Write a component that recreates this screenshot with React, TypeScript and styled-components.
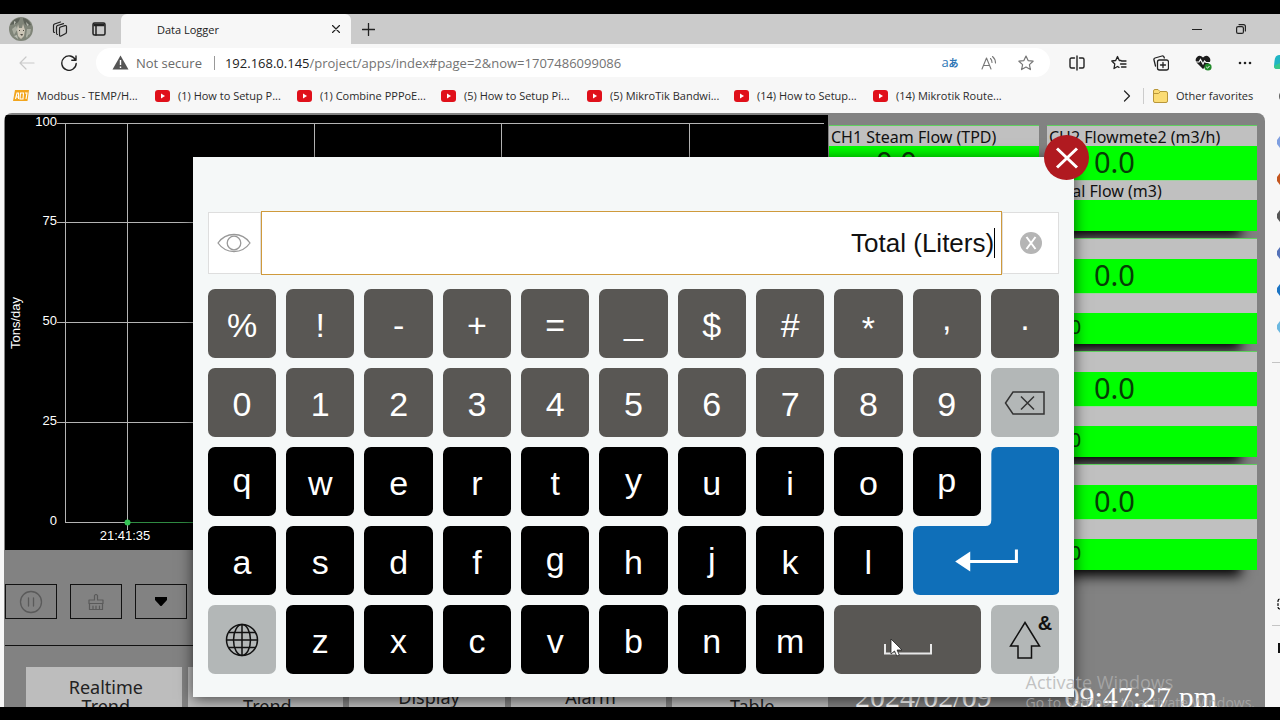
import React from "react";
import styled, { createGlobalStyle } from "styled-components";

const ui = '"Open Sans", "Noto Sans", sans-serif';
const arial = '"Liberation Sans", Arial, sans-serif';
const panelFont = '"Noto Sans", Tahoma, sans-serif';

const GlobalStyle = createGlobalStyle`
  *, *::before, *::after { box-sizing: border-box; }
  body { margin: 0; background: #000; font-family: ${ui}; }
  button { margin: 0; padding: 0; border: 0; background: none; color: inherit; font: inherit; cursor: pointer; }
  svg { display: block; flex: none; }
`;

const Frame = styled.div`
  display: flex;
  flex-direction: column;
  height: 100vh;
  padding: 14px 0 13px;
  background: #000;
  overflow: hidden;
`;

const IconButton = styled.button<{ $w?: number; $color?: string }>`
  display: flex;
  align-items: center;
  justify-content: center;
  flex: none;
  width: ${(p) => p.$w ?? 40}px;
  height: 28px;
  color: ${(p) => p.$color ?? "#222"};
`;

/* ---------- browser chrome ---------- */

const TabBar = styled.header`
  display: flex;
  align-items: center;
  flex: none;
  height: 30px;
  padding-left: 2px;
  background: #cbcbcb;
  overflow: hidden;
`;

const Tab = styled.div`
  display: flex;
  align-items: center;
  justify-content: space-between;
  width: 230px;
  height: 30px;
  margin-left: 2px;
  padding: 0 8px 0 36px;
  border-radius: 6px 6px 0 0;
  background: #f7f7f7;
  color: #222;
  font-size: 11px;
`;

const Spacer = styled.div`
  flex: 1;
`;

const AddressRow = styled.div`
  display: flex;
  align-items: center;
  flex: none;
  height: 38px;
  padding: 0 0 1px 6px;
  background: #f7f7f7;
  overflow: hidden;
`;

const AddressPill = styled.div`
  display: flex;
  align-items: center;
  flex: 1;
  min-width: 0;
  height: 29px;
  margin: 0 6px;
  padding: 0 6px 0 16px;
  border-radius: 15px;
  background: #fff;
`;

const NotSecure = styled.span`
  margin-left: 7px;
  padding-right: 12px;
  border-right: 1px solid #999;
  color: #6a6a6a;
  font-size: 13px;
  line-height: 14px;
  white-space: nowrap;
`;

const Url = styled.div`
  flex: 1;
  min-width: 0;
  padding-left: 10px;
  overflow: hidden;
  color: #737373;
  font-size: 13px;
  line-height: 18px;
  white-space: nowrap;
  b { color: #222; font-weight: 400; }
`;

const Translate = styled.span`
  font-family: "Open Sans", "Noto Sans CJK JP", sans-serif;
  font-size: 13px;
  line-height: 18px;
  small { font-size: 10px; font-weight: 700; }
`;

const BookmarkBar = styled.nav`
  display: flex;
  align-items: center;
  flex: none;
  height: 31px;
  padding: 0 0 4px 13px;
  background: #f7f7f7;
  overflow: hidden;
`;

const Bookmark = styled.a<{ $w?: number }>`
  display: flex;
  align-items: center;
  gap: 8px;
  flex: none;
  width: ${(p) => (p.$w ? `${p.$w}px` : "auto")};
  color: #2b2b2b;
  font-size: 11px;
  text-decoration: none;
  white-space: nowrap;
`;

const BarDivider = styled.span`
  width: 1px;
  height: 16px;
  margin-right: 9px;
  background: #ccc;
`;

/* ---------- page and sidebar ---------- */

const Body = styled.div`
  display: flex;
  flex: 1;
  min-height: 0;
  padding-left: 4px;
  background: #f7f7f7;
`;

const Page = styled.main`
  position: relative;
  flex: 1;
  min-width: 0;
  padding: 2px 0 0 1px;
  border-radius: 8px 8px 0 0;
  background: #828282;
  overflow: hidden;
`;

const Sidebar = styled.aside`
  display: flex;
  flex-direction: column;
  width: 15px;
  padding: 10px 0 41px;
  overflow: hidden;
`;

const SideItem = styled.button`
  display: flex;
  align-items: center;
  flex: none;
  width: 30px;
  height: 37px;
  padding-left: 12px;
`;

const SideRule = styled.hr<{ $gap: number }>`
  width: 8px;
  margin: ${(p) => p.$gap}px 0 3px 7px;
  border: 0;
  border-top: 1px solid #c4c4c4;
`;

const Dashboard = styled.div`
  display: flex;
  align-items: flex-start;
`;

const TrendPanel = styled.section`
  flex: 1;
  min-width: 0;
`;

const Chart = styled.svg`
  width: 100%;
  height: 435px;
  background: #000;
  font-family: ${arial};
  font-size: 13px;
  fill: #fff;
`;

const Controls = styled.div`
  display: flex;
  gap: 13px;
  height: 96px;
  padding-top: 34px;
  border-bottom: 1px solid #111;
`;

const ControlButton = styled.button`
  display: flex;
  align-items: center;
  justify-content: center;
  width: 52px;
  height: 35px;
  border: 1px solid #111;
  color: #5a5a5a;
`;

const Readouts = styled.section`
  display: grid;
  grid-template-columns: 1fr 1fr;
  gap: 7px 8px;
  width: 437px;
  padding: 10px 8px 0 1px;
`;

const Card = styled.article`
  font-family: ${panelFont};
  background: #0f0;
  box-shadow: 0 22px 12px -16px #000;
`;

const CardLabel = styled.h2<{ $short?: boolean }>`
  height: ${(p) => (p.$short ? 20 : 21)}px;
  margin: 0;
  padding: ${(p) => (p.$short ? 0 : 1)}px 2px 0;
  border-top: 1px solid ${(p) => (p.$short ? "#9fd39f" : "#5fd05f")};
  background: #c0c0c0;
  color: #111;
  font-size: 16px;
  font-weight: 400;
  line-height: 20px;
  white-space: nowrap;
`;

const CardValue = styled.div`
  height: 34px;
  padding-left: 47px;
  color: #063d06;
  font-size: 29px;
  line-height: 32px;
`;

const CardTotal = styled.div`
  height: 31px;
  padding-left: 6px;
  color: #063d06;
  font-size: 20px;
  line-height: 28px;
`;

const Footer = styled.footer`
  display: flex;
  margin-top: 21px;
  padding-left: 21px;
`;

const PageNav = styled.nav`
  display: flex;
  gap: 6px;
  flex: 1;
`;

const NavLink = styled.a`
  display: flex;
  align-items: center;
  justify-content: center;
  flex: 1;
  height: 60px;
  padding-left: 4px;
  background: #bdbdbd;
  color: #222;
  font-family: ${panelFont};
  font-size: 18px;
  line-height: 19px;
  text-align: center;
  text-decoration: none;
`;

const Clock = styled.div`
  display: flex;
  justify-content: space-between;
  width: 437px;
  padding: 0 48px 0 27px;
  color: #fff;
  font-family: "Liberation Serif", serif;
  font-size: 30px;
  line-height: 60px;
`;

const Watermark = styled.div`
  position: absolute;
  right: 10px;
  bottom: -5px;
  color: rgba(176, 176, 176, 0.75);
  font-size: 14px;
  line-height: 18px;
  white-space: nowrap;
  strong { display: block; font-size: 18px; font-weight: 400; line-height: 24px; }
`;

/* ---------- keyboard dialog ---------- */

const Overlay = styled.div`
  position: absolute;
  inset: 0;
  display: flex;
  align-items: flex-start;
  justify-content: center;
  padding: 44px 2px 0 0;
`;

const Dialog = styled.section`
  position: relative;
  width: 70%;
  min-width: 881px;
  padding: 54px 15px 23px;
  background: #f5f8f8;
  box-shadow: 0 2px 14px rgba(0, 0, 0, 0.65);
`;

const CloseButton = styled.button`
  position: absolute;
  top: -22px;
  right: -15px;
  display: flex;
  align-items: center;
  justify-content: center;
  width: 45px;
  height: 45px;
  border-radius: 50%;
  background: #b01a20;
`;

const EntryRow = styled.div`
  display: flex;
  align-items: center;
  margin-bottom: 14px;
`;

const EntryButton = styled.button<{ $w: number }>`
  display: flex;
  align-items: center;
  justify-content: center;
  width: ${(p) => p.$w}px;
  height: 62px;
  border: 1px solid #dedede;
  background: #fff;
`;

const EntryField = styled.div`
  display: flex;
  align-items: center;
  flex: 1;
  height: 64px;
  padding-right: 6px;
  border: 1px solid #cf9a3c;
  background: #fff;
`;

const EntryInput = styled.input`
  flex: 1;
  min-width: 0;
  padding: 0;
  border: 0;
  outline: 0;
  background: transparent;
  color: #111;
  font-family: ${arial};
  font-size: 26px;
  text-align: right;
`;

const Caret = styled.span`
  width: 1px;
  height: 30px;
  background: #000;
`;

const Keys = styled.div`
  display: grid;
  grid-template-columns: repeat(11, 1fr);
  grid-auto-rows: 69px;
  gap: 10px;
`;

type Tone = "symbol" | "letter" | "control";
type Place = "base" | "middle" | "high" | "raised" | "low" | "bottom";

const toneColor: Record<Tone, string> = { symbol: "#595754", letter: "#000", control: "#b3b7b7" };
const placePadding: Record<Place, string> = {
  base: "2px 0 0",
  middle: "0",
  high: "0 0 4px",
  raised: "0 0 12px",
  low: "8px 0 0",
  bottom: "20px 0 0",
};

const Key = styled.button<{ $tone: Tone; $place?: Place; $area?: string }>`
  position: relative;
  display: flex;
  align-items: center;
  justify-content: center;
  grid-area: ${(p) => p.$area ?? "auto"};
  min-width: 0;
  padding: ${(p) => placePadding[p.$place ?? "base"]};
  border-radius: 7px;
  background: ${(p) => toneColor[p.$tone]};
  color: ${(p) => (p.$tone === "control" ? "#111" : "#fff")};
  font-family: ${arial};
  font-size: 34px;
  line-height: 38px;
`;

const EnterKey = styled.button`
  grid-area: 3 / 10 / 5 / 12;
  pointer-events: none;
  svg { width: 100%; height: 100%; }
  path { pointer-events: auto; }
`;

const ShiftMark = styled.span`
  position: absolute;
  top: 6px;
  right: 7px;
  font-size: 20px;
  font-weight: 700;
  line-height: 24px;
`;

const Pointer = styled.svg`
  position: absolute;
  top: 33px;
  left: 56px;
`;

/* ---------- icons ---------- */

type LineProps = { w?: number; h?: number; sw?: number; children: React.ReactNode };
const Line = ({ w = 16, h = 16, sw = 1.2, children }: LineProps) => (
  <svg
    width={w}
    height={h}
    viewBox={`0 0 ${w} ${h}`}
    fill="none"
    stroke="currentColor"
    strokeWidth={sw}
    strokeLinecap="round"
    strokeLinejoin="round"
    aria-hidden="true"
  >
    {children}
  </svg>
);

const Avatar = () => (
  <svg width="24" height="24" viewBox="0 0 24 24" aria-hidden="true">
    <circle cx="12" cy="12" r="12" fill="#7f8478" />
    <path d="M1 8Q5 1 11 1q-1 5-5 6zM14 1q6 1 8 7l-4 1q-4-3-4-8z" fill="#5d6259" />
    <path d="M3 12l4-3 1 4-3 5zM18 12l4 0-1 5-4 2z" fill="#a9aca0" />
    <path d="M9 7l1 4h3l1-4 2 6-1 6-3 3-3-3-1-6z" fill="#cbc5b6" />
    <path d="M5 4l2 1-2 3zM17 5l3 3-2 1zM5 19l3-1 1 4zM17 19l2-2-1 4zM8 9l1 3-2 2z" fill="#b9bcb2" />
    <path d="M10 13h1v1h-1zM14 13h1v1h-1zM11 17h3l-1 2z" fill="#4d4a42" />
  </svg>
);

const YouTube = () => (
  <svg width="15" height="12" viewBox="0 0 15 12" aria-hidden="true">
    <rect width="15" height="12" rx="3" fill="#e0101a" />
    <path d="M6 3.5l4 2.5-4 2.5z" fill="#fff" />
  </svg>
);

const AoiLogo = () => (
  <svg width="16" height="12" viewBox="0 0 16 12" aria-hidden="true">
    <path d="M2 0h14l-1.500 11H0z" fill="#f2a51d" />
    <path d="M2.500 9L4 3h1.500v6M3.300 7h2M7.500 3h3l-.5 6h-3zM12 3h2l-1 6" fill="none" stroke="#fff" strokeWidth="1.100" />
  </svg>
);

const bookmarks: [string, number][] = [
  ["(1) How to Setup P...", 142],
  ["(1) Combine PPPoE...", 144],
  ["(5) How to Setup Pi...", 146],
  ["(5) MikroTik Bandwi...", 147],
  ["(14) How to Setup...", 139],
  ["(14) Mikrotik Route...", 142],
];

const ticks: [string, number][] = [["100", 8], ["75", 107], ["50", 207], ["25", 307], ["0", 407]];
const gridColumns = [60, 122, 309, 496, 684];

const placeOf = (k: string): Place => {
  if (",.".includes(k)) return "raised";
  if ("qypgj_".includes(k)) return "high";
  return k === "*" ? "low" : "base";
};

const renderKeys = (keys: string, tone: Tone) =>
  keys.split("").map((k) => (
    <Key key={k} type="button" $tone={tone} $place={placeOf(k)}>
      {k}
    </Key>
  ));

const Readout = ({ label, value, totalLabel, total }: { label?: string; value?: string; totalLabel?: string; total?: string }) => (
  <Card>
    <CardLabel>{label}</CardLabel>
    <CardValue>{value}</CardValue>
    <CardLabel as="h3" $short>{totalLabel}</CardLabel>
    <CardTotal>{total}</CardTotal>
  </Card>
);

export default function App() {
  const [text, setText] = React.useState("Total (Liters)");
  return (
    <Frame>
      <GlobalStyle />

      <TabBar>
        <IconButton $w={38} aria-label="Profile"><Avatar /></IconButton>
        <IconButton $w={39} aria-label="Workspaces">
          <Line>
            <path d="M7.500 7.500Q7.500 6.500 8.500 6L13 4.600q1.500-.4 1.500 1V11q0 1-.8 1.500L9 15q-1.500.5-1.500-1z" />
            <path d="M5.500 13.500Q4.500 13.500 4.500 12V6q0-1 1-1.500L11.500 2.600M2.500 11.500Q1.500 11.500 1.500 10V4.500q0-1 1-1.500L8.500 1" />
          </Line>
        </IconButton>
        <IconButton $w={40} aria-label="Tab actions">
          <Line w={14} h={14} sw={1.5}>
            <rect x="1" y="1" width="12" height="12" rx="1.5" />
            <path d="M1.500 3h11" strokeWidth="2.500" strokeLinecap="butt" />
            <path d="M4 4v9" />
          </Line>
        </IconButton>
        <Tab>
          Data Logger
          <IconButton $w={14} aria-label="Close tab"><Line w={8} h={8}><path d="M.5.5l7 7M7.500.5l-7 7" /></Line></IconButton>
        </Tab>
        <IconButton $w={34} aria-label="New tab"><Line w={13} h={13} sw={1.3}><path d="M6.500.5v12M.5 6.500h12" /></Line></IconButton>
        <Spacer />
        <IconButton $w={44} aria-label="Minimize"><Line w={10} h={10}><path d="M.5 5.500h9" /></Line></IconButton>
        <IconButton $w={44} aria-label="Restore">
          <Line w={10} h={10}><rect x=".6" y="2.600" width="6.800" height="6.800" rx="1.500" /><path d="M3 .6h4.500Q9.400.6 9.400 2.500V7" /></Line>
        </IconButton>
        <IconButton $w={17} aria-label="Close window" />
      </TabBar>

      <AddressRow>
        <IconButton $w={42} $color="#c9c9c9" aria-label="Back"><Line><path d="M15 8H1M7 2L1 8l6 6" /></Line></IconButton>
        <IconButton $w={42} aria-label="Reload"><Line sw={1.4}><path d="M14.500 5A7.200 7.200 0 1 0 15.200 8.500M15 1v4.200h-4.200" /></Line></IconButton>
        <AddressPill>
          <svg width="17" height="15" viewBox="0 0 17 15" aria-hidden="true">
            <path d="M8.500.5L16.500 14.500H.5z" fill="#555" />
            <path d="M8.500 5v5M8.500 11.500v1.500" stroke="#fff" strokeWidth="1.400" />
          </svg>
          <NotSecure>Not secure</NotSecure>
          <Url><b>192.168.0.145</b>/project/apps/index#page=2&amp;now=1707486099086</Url>
          <IconButton $w={38} $color="#2e76b6" aria-label="Translate"><Translate>a<small>あ</small></Translate></IconButton>
          <IconButton $w={39} $color="#777" aria-label="Read aloud">
            <Line sw={1.1}><path d="M1 14L5.500 3 10 14M2.600 10.500h6M9.500 3.500q1.500 1.500 1.500 4M11.500 1.500Q14.500 4 14.500 8" /></Line>
          </IconButton>
          <IconButton $w={36} $color="#777" aria-label="Add favorite">
            <Line><path d="M8 1l2.100 4.600 5 .6-3.700 3.400 1 5L8 12.100l-4.400 2.500 1-5L.9 6.200l5-.6z" /></Line>
          </IconButton>
        </AddressPill>
        <IconButton $w={42} aria-label="Split screen">
          <Line sw={1.4}><path d="M8 1v14M5.500 3H2.500Q1 3 1 4.500v7Q1 13 2.500 13h3M10.500 3h3Q15 3 15 4.500v7q0 1.500-1.500 1.500h-3" /></Line>
        </IconButton>
        <IconButton $w={42} aria-label="Favorites">
          <Line sw={1.3}><path d="M10 5.500H8.300L6.500 1.500 4.700 5.500.8 6l3 3-.8 4.500 3.500-2 1.500.9M10.500 6H15M9.500 9H15M10.500 12H15" /></Line>
        </IconButton>
        <IconButton $w={42} aria-label="Collections">
          <Line sw={1.3}><rect x="4.500" y="5" width="11" height="10" rx="2" /><path d="M10 7.500v5M7.500 10h5M2.500 11L1 5Q.6 3.500 2 3l7-2q1.500-.4 2 1l.3 1" /></Line>
        </IconButton>
        <IconButton $w={42} aria-label="Browser essentials">
          <svg width="17" height="16" viewBox="0 0 17 16" aria-hidden="true">
            <path d="M8 14L1.500 7.500Q-.5 4.500 2 2 5-.5 8 2.500 11-.5 14 2q2.500 2.500.5 5.500z" fill="#1c1c1c" />
            <path d="M0 7h4l1.500-2.500L8 9l1.500-3L11 7.500h4" fill="none" stroke="#f7f7f7" strokeWidth="1.200" />
            <circle cx="13" cy="12" r="3.600" fill="#238a2b" />
            <path d="M11.300 12l1.200 1.200 2-2.200" fill="none" stroke="#fff" />
          </svg>
        </IconButton>
        <IconButton $w={42} aria-label="Settings and more">
          <svg width="14" height="4" viewBox="0 0 14 4" fill="#222" aria-hidden="true"><circle cx="2" cy="2" r="1.300" /><circle cx="7" cy="2" r="1.300" /><circle cx="12" cy="2" r="1.300" /></svg>
        </IconButton>
        <IconButton $w={14} aria-label="Copilot">
          <svg width="14" height="18" viewBox="0 0 14 18" aria-hidden="true"><path d="M14 1h-1Q9 1 8.500 7L8 12q0 3 3 3h3z" fill="#21b5c4" /><path d="M14 9L8 12q0 3 3 3h3z" fill="#38c88b" /></svg>
        </IconButton>
      </AddressRow>

      <BookmarkBar>
        <Bookmark href="#" $w={142}><AoiLogo />Modbus - TEMP/H...</Bookmark>
        {bookmarks.map(([name, w]) => (
          <Bookmark key={name} href="#" $w={w}><YouTube />{name}</Bookmark>
        ))}
        <Spacer />
        <IconButton $w={32} aria-label="More favorites"><Line w={8} h={12}><path d="M1.500 1l5 5-5 5" /></Line></IconButton>
        <BarDivider />
        <Bookmark href="#" $w={124}>
          <svg width="15" height="14" viewBox="0 0 15 14" aria-hidden="true">
            <path d="M.5 2Q.5.5 2 .5h3l2 2h6q1.500 0 1.500 1.500v8q0 1.500-1.500 1.500H2Q.5 13.500.5 12z" fill="#fbdc74" stroke="#b8963a" />
            <path d="M1 4.500h4.500L7 3" fill="none" stroke="#b8963a" />
          </svg>
          Other favorites
        </Bookmark>
        <IconButton $w={3} $color="#666" aria-label="Search"><Line w={3} h={14}><path d="M6 2.500A5 5 0 0 0 6 12" /></Line></IconButton>
      </BookmarkBar>

      <Body>
        <Page>
          <Dashboard>
            <TrendPanel>
              <Chart viewBox="0 0 823 435" preserveAspectRatio="xMinYMin slice" role="img" aria-label="Tons per day trend">
                <g stroke="#b4b4b4" strokeWidth="1">
                  {ticks.map(([t, y]) => <line key={t} x1={t === "0" ? 60 : 52} x2="819" y1={y + 0.5} y2={y + 0.5} />)}
                  {gridColumns.map((x) => <line key={x} x1={x + 0.5} x2={x + 0.5} y1="8" y2={x === 122 ? 415 : 407} />)}
                </g>
                <path d="M122 407.500H819" stroke="#2f8a42" />
                <circle cx="122.500" cy="407.500" r="3" fill="#35c455" />
                {ticks.map(([t, y]) => <text key={t} x="52" y={y + 3} textAnchor="end">{t}</text>)}
                <text x="120" y="425" textAnchor="middle">21:41:35</text>
                <text transform="translate(15 208) rotate(-90)" textAnchor="middle">Tons/day</text>
              </Chart>
              <Controls>
                <ControlButton aria-label="Pause"><Line w={24} h={24} sw={1.3}><circle cx="12" cy="12" r="10.500" /><path d="M9.500 8v8M14.500 8v8" /></Line></ControlButton>
                <ControlButton aria-label="Clear"><Line><path d="M6.500 6V1.500Q8-.5 9.500 1.500V6H15v3.500H1V6zM1.500 9.500V15.500h13V9.500M5 12v3M8 12v3M11.500 12v3" /></Line></ControlButton>
                <ControlButton aria-label="More"><svg width="12" height="9" viewBox="0 0 12 9" aria-hidden="true"><path d="M0 0h12v3L6.500 9h-1L0 3z" fill="#000" /></svg></ControlButton>
              </Controls>
            </TrendPanel>
            <Readouts>
              <Readout label="CH1 Steam Flow (TPD)" value="0.0" />
              <Readout label="CH2 Flowmete2 (m3/h)" value="0.0" totalLabel="Total Flow (m3)" />
              <Readout />
              <Readout value="0.0" total="0.0" />
              <Readout />
              <Readout value="0.0" total="0.0" />
              <Readout />
              <Readout value="0.0" total="0.0" />
            </Readouts>
          </Dashboard>

          <Footer>
            <PageNav>
              <NavLink href="#">Realtime<br />Trend</NavLink>
              <NavLink href="#">Historical<br />Trend</NavLink>
              <NavLink href="#">Display</NavLink>
              <NavLink href="#">Alarm</NavLink>
              <NavLink href="#">Data<br />Table</NavLink>
            </PageNav>
            <Clock><span>2024/02/09</span><span>09:47:27 pm</span></Clock>
          </Footer>

          <Overlay>
            <Dialog role="dialog" aria-label="Keyboard">
              <CloseButton aria-label="Close">
                <svg width="24" height="22" viewBox="0 0 24 22" stroke="#fff" strokeWidth="3" aria-hidden="true"><path d="M2 1.500l20 19M22 1.500l-20 19" /></svg>
              </CloseButton>
              <EntryRow>
                <EntryButton $w={53} aria-label="Show text">
                  <svg width="34" height="20" viewBox="0 0 34 20" fill="none" stroke="#999" strokeWidth="1.300" aria-hidden="true">
                    <path d="M1 10Q7 1.500 17 1.500T33 10Q27 18.500 17 18.500T1 10z" /><circle cx="17" cy="10" r="6.800" />
                  </svg>
                </EntryButton>
                <EntryField>
                  <EntryInput aria-label="Text" value={text} onChange={(e) => setText(e.target.value)} />
                  <Caret />
                </EntryField>
                <EntryButton $w={57} aria-label="Clear text">
                  <svg width="22" height="22" viewBox="0 0 22 22" aria-hidden="true">
                    <circle cx="11" cy="11" r="11" fill="#b5b5b5" /><path d="M6.500 5l9 12M15.500 5l-9 12" stroke="#fff" strokeWidth="2" />
                  </svg>
                </EntryButton>
              </EntryRow>
              <Keys>
                {renderKeys("%!-+=_$#*,.", "symbol")}
                {renderKeys("0123456789", "symbol")}
                <Key type="button" $tone="control" $place="middle" aria-label="Backspace">
                  <svg width="42" height="24" viewBox="0 0 42 24" fill="none" stroke="#333" strokeWidth="1.500" aria-hidden="true">
                    <path d="M9 1h31v22H9L1.500 12z M17 5.500l13 13M30 5.500l-13 13" />
                  </svg>
                </Key>
                {renderKeys("qwertyuio", "letter")}
                <Key type="button" $tone="letter" $place="high" $area="3 / 10">p</Key>
                <EnterKey type="button" aria-label="Enter">
                  <svg viewBox="0 0 146 148" preserveAspectRatio="none" aria-hidden="true">
                    <path d="M85 0H139Q146 0 146 7V141Q146 148 139 148H7Q0 148 0 141V86Q0 79 7 79H72Q78 79 78 73V7Q78 0 85 0z" fill="#0f6fb9" />
                    <path d="M42 114.500L57 104.500V113H101.500V102.500H104.500V116H57V124.500z" fill="#fff" />
                  </svg>
                </EnterKey>
                {renderKeys("asdfghjkl", "letter")}
                <Key type="button" $tone="control" $place="middle" aria-label="Language">
                  <svg width="34" height="34" viewBox="0 0 34 34" fill="none" stroke="#111" strokeWidth="1.500" aria-hidden="true">
                    <circle cx="17" cy="17" r="15.500" /><ellipse cx="17" cy="17" rx="8.500" ry="15.500" />
                    <path d="M17 1.500v31M1.500 17h31M4 9.500h26M4 24.500h26" />
                  </svg>
                </Key>
                {renderKeys("zxcvbnm", "letter")}
                <Key type="button" $tone="symbol" $place="bottom" $area="5 / 9 / 6 / 11" aria-label="Space">
                  <svg width="48" height="11" viewBox="0 0 48 11" fill="none" stroke="#e8e8e8" strokeWidth="2" aria-hidden="true"><path d="M1 0v9.500h46V0" /></svg>
                  <Pointer width="13" height="19" viewBox="0 0 13 19" aria-hidden="true">
                    <path d="M1 1v15l3.500-3 2.300 5 2.500-1-2.200-5H12z" fill="#fff" stroke="#222" strokeWidth=".8" />
                  </Pointer>
                </Key>
                <Key type="button" $tone="control" $place="middle" aria-label="Shift">
                  <svg width="32" height="40" viewBox="0 0 32 40" fill="none" stroke="#111" strokeWidth="1.500" aria-hidden="true">
                    <path d="M16 2.500L30.500 26H22.500V38H9V26H1.500z" />
                  </svg>
                  <ShiftMark>&amp;</ShiftMark>
                </Key>
              </Keys>
            </Dialog>
          </Overlay>

          <Watermark><strong>Activate Windows</strong>Go to Settings to activate Windows.</Watermark>
        </Page>

        <Sidebar>
          {["#7f9fe0", "#c4551e", "#555", "#5572b8", "#1b74c4", "#6bb8e0"].map((c) => (
            <SideItem key={c} aria-label="Sidebar app">
              <svg width="12" height="12" viewBox="0 0 12 12" aria-hidden="true"><path d="M3 0h9v12H3L0 8V4z" fill={c} /></svg>
            </SideItem>
          ))}
          <SideRule $gap={17} />
          <Spacer />
          <SideItem aria-label="Screenshot"><Line w={12} h={12}><rect x="1" y="1" width="12" height="10" rx="2" strokeDasharray="2 2" /></Line></SideItem>
          <SideRule $gap={3} />
          <SideItem aria-label="Sidebar settings"><svg width="12" height="10" aria-hidden="true"><rect x="1" width="11" height="10" fill="#111" /></svg></SideItem>
        </Sidebar>
      </Body>
    </Frame>
  );
}
